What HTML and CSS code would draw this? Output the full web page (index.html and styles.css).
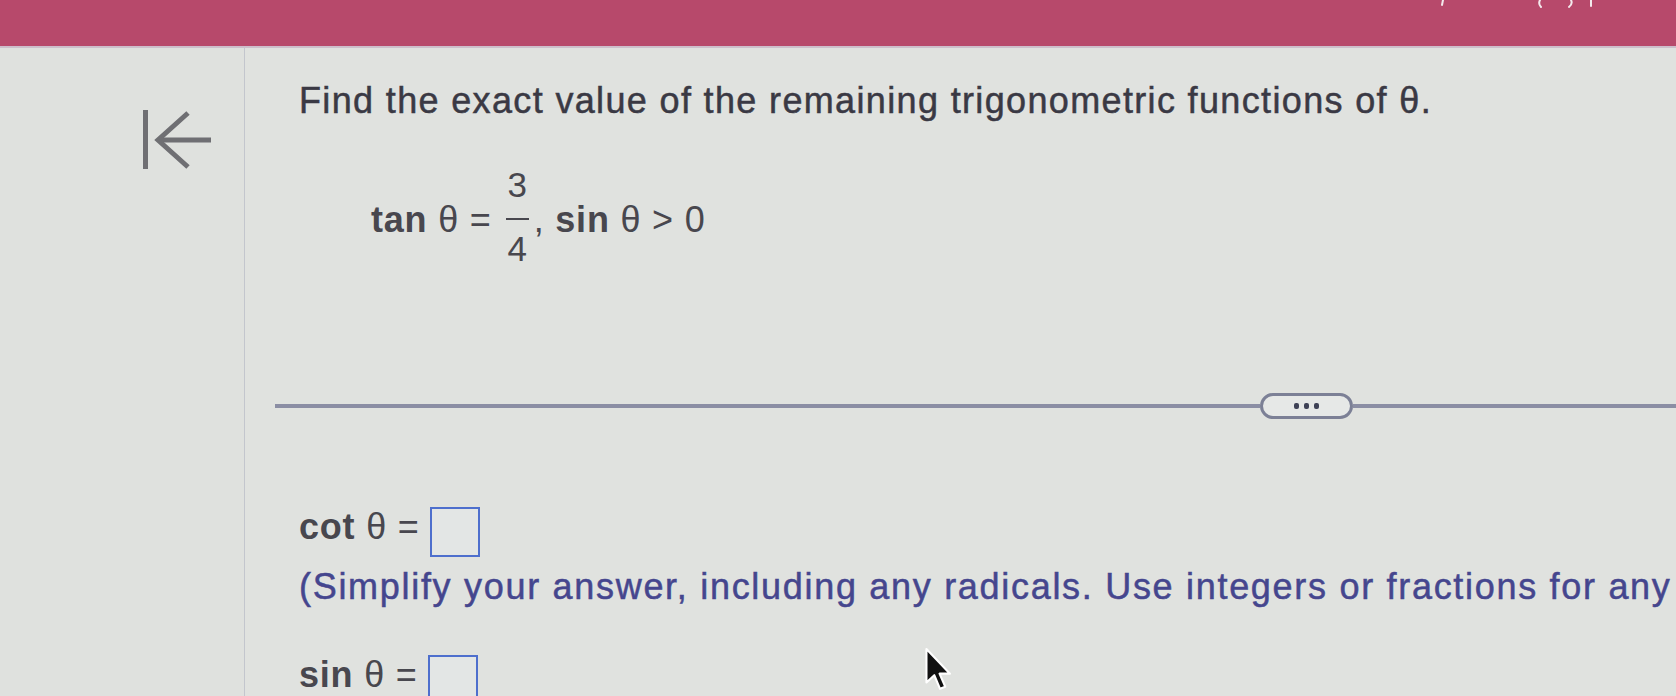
FILE: index.html
```html
<!DOCTYPE html>
<html lang="en">
<head>
<meta charset="utf-8">
<title>Trigonometric functions</title>
<link rel="stylesheet" href="styles.css">
</head>
<body>
<header class="topbar">
  <svg class="topbar-marks" width="160" height="10" viewBox="0 0 160 10">
    <path d="M3 0 L2 5" stroke="#f3e9ec" stroke-width="2" fill="none" stroke-linecap="round"/>
    <path d="M100 0 Q98 4 101 7" stroke="#f3e9ec" stroke-width="2" fill="none" stroke-linecap="round"/>
    <path d="M131 0 Q133 4 129 7" stroke="#f3e9ec" stroke-width="2" fill="none" stroke-linecap="round"/>
    <path d="M151 0 L151 6" stroke="#f3e9ec" stroke-width="2" fill="none" stroke-linecap="round"/>
  </svg>
</header>
<main class="layout">
  <aside class="nav">
    <svg class="back-icon" width="72" height="62" viewBox="0 0 72 62">
      <rect x="0" y="0" width="5" height="59" fill="#6f6f73"/>
      <path d="M68 30 L15 30" stroke="#6f6f73" stroke-width="5" fill="none"/>
      <path d="M45 3 L15 30 L45 57" stroke="#6f6f73" stroke-width="5" fill="none" stroke-linejoin="miter"/>
    </svg>
  </aside>
  <section class="content">
    <h1 class="question">Find the exact value of the remaining trigonometric functions of θ.</h1>
    <div class="given">
      <span class="expr"><b>tan</b> θ =</span>
      <span class="frac"><span class="num">3</span><span class="bar"></span><span class="den">4</span></span>
      <span class="expr">, <b>sin</b> θ &gt; 0</span>
    </div>
    <div class="divider">
      <span class="rule rule-left"></span>
      <span class="more"><i></i><i></i><i></i></span>
      <span class="rule rule-right"></span>
    </div>
    <div class="answer-row">
      <span class="expr"><b>cot</b> θ =</span>
      <span class="answer-box"></span>
    </div>
    <p class="hint">(Simplify your answer, including any radicals. Use integers or fractions for any rational numbers in the expression.)</p>
    <div class="answer-row answer-row-sin">
      <span class="expr"><b>sin</b> θ =</span>
      <span class="answer-box"></span>
    </div>
  </section>
</main>
<svg class="cursor" width="30" height="46" viewBox="0 0 28 44">
  <path d="M2 2 L2 34 L9.5 27 L15 40 L20 38 L14.5 25.5 L24.5 25.5 Z" fill="#111" stroke="#fff" stroke-width="2" stroke-linejoin="round"/>
</svg>
</body>
</html>
```
FILE: styles.css
```css
html, body {
  margin: 0;
  padding: 0;
  height: 100%;
  overflow: hidden;
}
body {
  background: #e0e2df;
  font-family: "Liberation Sans", Arial, Helvetica, sans-serif;
  color: #3a3944;
  position: relative;
}
.topbar {
  height: 48px;
  background: #b7496b;
  border-bottom: 2px solid #cdbfcb;
  box-sizing: border-box;
  display: flex;
  justify-content: flex-end;
  align-items: flex-start;
  padding-right: 76px;
}
.topbar-marks {
  display: block;
}
.layout {
  display: flex;
  height: calc(100% - 48px);
}
.nav {
  width: 245px;
  flex: none;
  border-right: 1px solid #c3c6cd;
  background: #dfe1de;
  padding: 62px 0 0 143px;
  box-sizing: border-box;
}
.back-icon {
  display: block;
}
.content {
  flex: 1;
  padding: 33px 0 0 54px;
  min-width: 0;
}
.question {
  margin: 0;
  font-size: 36px;
  line-height: 40px;
  letter-spacing: 1.35px;
  font-weight: normal;
  color: #3a3944;
  -webkit-text-stroke: 0.5px #3a3944;
  white-space: nowrap;
}
.given {
  display: flex;
  align-items: center;
  margin-top: 49px;
  padding-left: 72px;
  color: #48474e;
}
.expr {
  font-size: 36px;
  line-height: 40px;
  letter-spacing: 0.8px;
  white-space: pre;
}
.expr b {
  font-weight: bold;
}
.frac {
  display: flex;
  flex-direction: column;
  align-items: center;
  padding-bottom: 5px;
  margin: 0 5px 0 14px;
  font-size: 35px;
}
.num {
  line-height: 30px;
  height: 48px;
}
.bar {
  width: 23px;
  height: 2px;
  background: #48474e;
}
.den {
  line-height: 30px;
  padding-top: 14px;
}
.divider {
  display: flex;
  align-items: center;
  margin: 124px 0 0 -24px;
  height: 26px;
}
.rule {
  height: 4px;
  background: #8b8ea4;
}
.rule-left {
  width: 985px;
  flex: none;
}
.rule-right {
  flex: 1;
}
.more {
  width: 93px;
  height: 26px;
  box-sizing: border-box;
  border: 3px solid #7c8096;
  border-radius: 13px;
  background: #e6e8e7;
  display: flex;
  align-items: center;
  justify-content: center;
  gap: 5px;
  flex: none;
}
.more i {
  width: 5px;
  height: 6px;
  border-radius: 2px;
  background: #3e4156;
}
.answer-row {
  display: flex;
  align-items: flex-start;
  margin-top: 88px;
  color: #48474e;
}
.answer-row-sin {
  margin-top: 48px;
}
.answer-box {
  width: 50px;
  height: 50px;
  box-sizing: border-box;
  border: 2px solid #4e6fcd;
  background: #e3e6e5;
  margin-left: 10px;
  flex: none;
}
.hint {
  margin: 10px 0 0 0;
  font-size: 36px;
  line-height: 40px;
  letter-spacing: 1.7px;
  color: #45468e;
  -webkit-text-stroke: 0.5px #45468e;
  white-space: nowrap;
}
.cursor {
  position: absolute;
  left: 924px;
  top: 647px;
}
```
